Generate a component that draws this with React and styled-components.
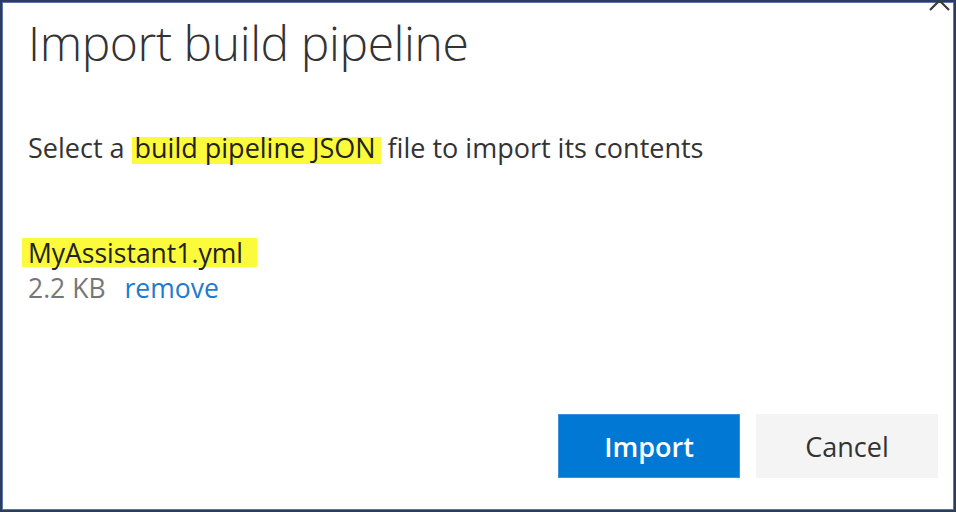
import React from "react";
import styled, { createGlobalStyle } from "styled-components";

const Global = createGlobalStyle`
  html, body { margin: 0; padding: 0; background: #ffffff; }
  body { font-family: "Open Sans", "Noto Sans", "Liberation Sans", sans-serif; }
  * { box-sizing: border-box; }
`;

const Frame = styled.div`
  position: relative;
  width: 956px;
  height: 512px;
  background: #ffffff;
  border: 2px solid #2c3b5e;
  box-shadow: inset 0 0 0 1px #5d76ab;
  overflow: hidden;
  display: flex;
  flex-direction: column;
`;

const CloseMark = styled.svg`
  position: absolute;
  top: -13px;
  right: 3px;
  width: 23px;
  height: 23px;
`;

const Body = styled.div`
  flex: 1;
  display: flex;
  flex-direction: column;
  padding: 11px 0 0 26px;
`;

const Title = styled.h1`
  margin: 0;
  font-family: "Open Sans", "Noto Sans", sans-serif;
  font-weight: 300;
  font-size: 48px;
  line-height: 60px;
  color: #333333;
  letter-spacing: -0.4px;
`;

const Prompt = styled.p`
  margin: 60px 0 0 0;
  font-size: 27px;
  line-height: 30px;
  color: #333333;
`;

const Mark = styled.mark`
  display: inline-block;
  background: #fbfb3c;
  color: #222222;
  line-height: 22px;
  padding: ${(p) => p.$pad};
  margin: ${(p) => p.$margin || "0"};
`;

const FileBlock = styled.div`
  margin-top: 74px;
  display: flex;
  flex-direction: column;
`;

const FileName = styled.div`
  font-size: 26.5px;
  line-height: 29px;
  color: #333333;
`;

const MetaRow = styled.div`
  margin-top: 5px;
  display: flex;
  align-items: baseline;
  gap: 19px;
  font-size: 26.5px;
  line-height: 30px;
`;

const Size = styled.span`
  color: #767676;
`;

const Link = styled.a`
  color: #1e7bd1;
  text-decoration: none;
  cursor: pointer;
`;

const Footer = styled.div`
  display: flex;
  justify-content: flex-end;
  gap: 16px;
  padding: 0 16px 32px 0;
`;

const Button = styled.button`
  width: 182px;
  height: 64px;
  border: none;
  font-family: "Open Sans", "Noto Sans", sans-serif;
  font-size: 27px;
  font-weight: ${(p) => (p.$primary ? 600 : 400)};
  color: ${(p) => (p.$primary ? "#ffffff" : "#333333")};
  background: ${(p) => (p.$primary ? "#0078d4" : "#f4f4f4")};
  box-shadow: ${(p) => (p.$primary ? "inset 0 0 0 1px #3a90e0" : "none")};
  cursor: pointer;
`;

export default function App() {
  return (
    <>
      <Global />
      <Frame>
        <CloseMark viewBox="0 0 23 23">
          <path d="M2 2 L21 21 M21 2 L2 21" stroke="#3c3c3c" strokeWidth="2.2" fill="none" />
        </CloseMark>
        <Body>
          <Title>Import build pipeline</Title>
          <Prompt>
            Select a <Mark $pad="0 5px 5px 3px">build pipeline JSON</Mark> file to import its contents
          </Prompt>
          <FileBlock>
            <FileName>
              <Mark $pad="4px 14px 3px 6px" $margin="0 0 0 -6px">MyAssistant1.yml</Mark>
            </FileName>
            <MetaRow>
              <Size>2.2 KB</Size>
              <Link>remove</Link>
            </MetaRow>
          </FileBlock>
        </Body>
        <Footer>
          <Button $primary>Import</Button>
          <Button>Cancel</Button>
        </Footer>
      </Frame>
    </>
  );
}
